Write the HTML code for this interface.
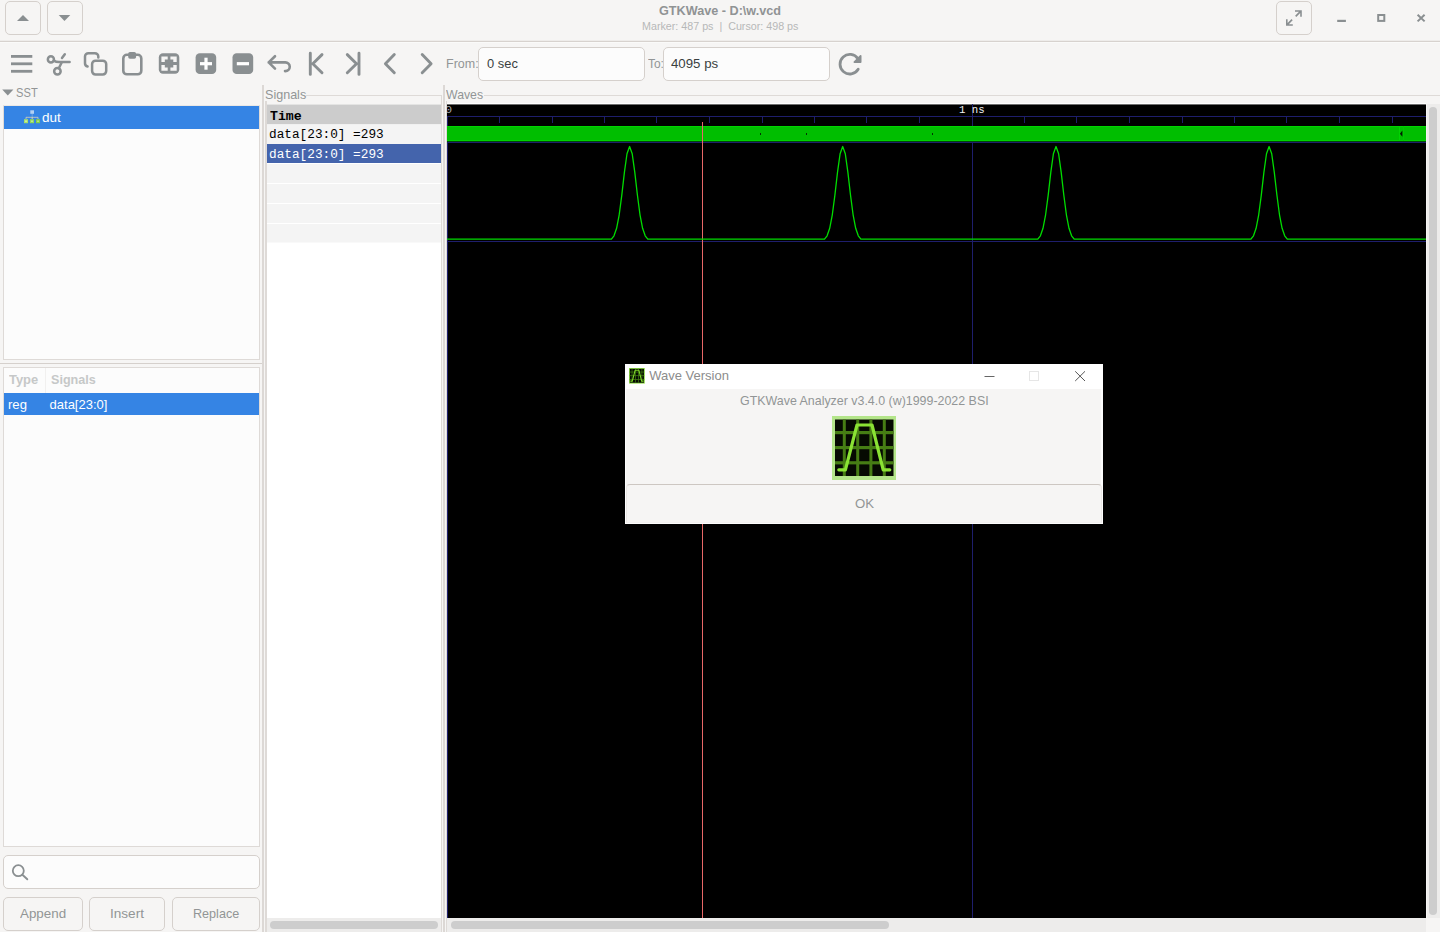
<!DOCTYPE html>
<html>
<head>
<meta charset="utf-8">
<title>GTKWave</title>
<style>
html,body{margin:0;padding:0;}
body{width:1440px;height:932px;overflow:hidden;background:#f6f5f4;font-family:"Liberation Sans",sans-serif;font-size:13px;color:#929596;position:relative;}
.abs{position:absolute;}
#root{position:absolute;left:0;top:0;width:1440px;height:932px;overflow:hidden;background:#f6f5f4;}
.btn{position:absolute;box-sizing:border-box;border:1px solid #d5d0cc;border-radius:5px;background:#f6f5f4;}
.lbl{position:absolute;white-space:nowrap;line-height:1;font-size:13px;}
.entry{position:absolute;box-sizing:border-box;border:1px solid #d5d0cc;border-radius:5px;background:#fcfcfc;}
.mono{font-family:"Liberation Mono",monospace;}
svg{position:absolute;overflow:visible;}
</style>
</head>
<body>
<div id="root">

<div class="abs" style="left:0px;top:40px;width:1440px;height:1px;background:#eeecea;"></div>
<div class="abs" style="left:0px;top:41px;width:1440px;height:1px;background:#d7d2ce;"></div>
<div class="abs" style="left:0px;top:42px;width:1440px;height:1px;background:#fafaf9;"></div>
<div class="btn" style="left:5px;top:1px;width:36px;height:34px;"></div>
<div class="btn" style="left:47px;top:1px;width:36px;height:34px;"></div>
<div class="btn" style="left:1276px;top:1px;width:36px;height:34px;"></div>
<div class="lbl" id="title" style="left:659.34px;top:4.7px;font-size:12.3px;color:#909394;font-weight:bold;transform:scaleX(1.0286);transform-origin:0 0;">GTKWave - D:\w.vcd</div>
<div class="lbl" id="subtitle" style="left:642.25px;top:21.0px;font-size:10.67px;color:#b6b8b8;transform:scaleX(1.0055);transform-origin:0 0;">Marker: 487 ps&nbsp; |&nbsp; Cursor: 498 ps</div>
<div class="lbl" id="from" style="left:446.29px;top:56.8px;transform:scaleX(0.961);transform-origin:0 0;">From:</div>
<div class="entry" style="left:478px;top:47px;width:167px;height:34px;"></div>
<div class="lbl" id="fromv" style="left:486.99px;top:56.7px;color:#3a3f41;transform:scaleX(0.9922);transform-origin:0 0;">0 sec</div>
<div class="lbl" id="to" style="left:647.58px;top:56.7px;transform:scaleX(0.9193);transform-origin:0 0;">To:</div>
<div class="entry" style="left:663px;top:47px;width:167px;height:34px;"></div>
<div class="lbl" id="tov" style="left:671.33px;top:56.6px;color:#3a3f41;transform:scaleX(1.0191);transform-origin:0 0;">4095 ps</div>

<svg style="left:0;top:0" width="1440" height="104" fill="none" stroke="none">
 <path d="M17 21 L23 15 L29 21 Z" fill="#8a8f91"/><path d="M58.7 15 L70.3 15 L64.5 21 Z" fill="#8a8f91"/>
 <path d="M2.2 89.5 L13.4 89.5 L7.8 95.4 Z" fill="#8a8f91"/>
 <g fill="#8a8f91">
  <rect x="11" y="55" width="21.3" height="2.8"/><rect x="11" y="62.4" width="21.3" height="2.8"/><rect x="11" y="69.9" width="21.3" height="2.8"/>
 </g>
 <g stroke="#8a8f91" stroke-width="2.5" stroke-linecap="round" fill="none">
  <circle cx="50.9" cy="59.4" r="3.05"/>
  <circle cx="57.4" cy="71.3" r="3.25"/>
  <path d="M53.7 60.6 Q56 62 59 62 H69.6"/>
  <path d="M58.8 68.3 L61.8 62.3"/>
  <path d="M62 58 L64.8 54.2" stroke-width="2.5"/>
 </g>
 <g stroke="#8a8f91" stroke-width="2.5" stroke-linecap="round" fill="none">
  <path d="M98.3 57.5 V56.6 a3.4 3.4 0 0 0 -3.4 -3.4 H88.4 a3.4 3.4 0 0 0 -3.4 3.4 V63.2 a3.4 3.4 0 0 0 2.6 3.3"/>
  <rect x="92.1" y="60.7" width="14.1" height="13.8" rx="3.4"/>
 </g>
 <g>
  <rect x="123.3" y="54.8" width="18" height="19.5" rx="3.6" stroke="#8a8f91" stroke-width="2.6" fill="none"/>
  <rect x="128.2" y="52" width="7.9" height="6.8" rx="1.8" fill="#8a8f91"/>
 </g>
 <rect x="158.8" y="53.3" width="20.5" height="20.5" rx="4.2" fill="#8a8f91"/>
 <polygon points="161.40,56.40 167.70,56.40 167.70,59.50 164.80,59.50 164.80,62.00 161.40,62.00" fill="#f6f5f4"/><polygon points="176.70,56.40 170.40,56.40 170.40,59.50 173.30,59.50 173.30,62.00 176.70,62.00" fill="#f6f5f4"/><polygon points="161.40,70.70 167.70,70.70 167.70,67.60 164.80,67.60 164.80,65.10 161.40,65.10" fill="#f6f5f4"/><polygon points="176.70,70.70 170.40,70.70 170.40,67.60 173.30,67.60 173.30,65.10 176.70,65.10" fill="#f6f5f4"/>
 <rect x="195.6" y="53.3" width="20.6" height="20.8" rx="4.2" fill="#8a8f91"/>
 <rect x="200" y="62.1" width="12" height="3.2" fill="#fff"/><rect x="204.4" y="57.7" width="3.2" height="12" fill="#fff"/>
 <rect x="232.5" y="53.3" width="20.7" height="20.8" rx="4.2" fill="#8a8f91"/>
 <rect x="236.8" y="62.1" width="12.2" height="3.2" fill="#fff"/>
 <path d="M275 56.2 L268.7 62.4 L275 68.6 M268.7 62.4 H285.4 a4.35 4.35 0 0 1 0 8.7 H285" stroke="#8a8f91" stroke-width="2.6" stroke-linecap="round" stroke-linejoin="round"/>
 <g stroke="#8a8f91" stroke-width="2.9" stroke-linecap="round" stroke-linejoin="round">
  <path d="M310.3 53.3 V74.4 M322 54.6 L312.8 63.7 L322 72.8"/>
  <path d="M359 53.3 V74.4 M347.3 54.6 L356.5 63.7 L347.3 72.8"/>
  <path d="M394.3 54.6 L385.4 63.7 L394.3 72.8"/>
  <path d="M422.2 54.6 L431.1 63.7 L422.2 72.8"/>
 </g>
 <g stroke="#8a8f91" stroke-width="2.8" stroke-linecap="round" stroke-linejoin="round">
  <path d="M857.9 58.6 A9.8 9.8 0 1 0 858.2 69.3"/>
  <path d="M860.6 56 V62.1 H854.4 Z" fill="#8a8f91" stroke-width="1.8"/>
 </g>
 <g fill="#8a8f91">
  <path d="M1295 10.2 H1301.8 V16.8 H1300.2 V13 L1296.3 16.9 L1295.1 15.7 L1299 11.8 H1295 Z"/>
  <path d="M1292.8 25.8 H1286 V19.2 H1287.6 V23 L1291.5 19.1 L1292.7 20.3 L1288.8 24.2 H1292.8 Z"/>
  <rect x="1337.2" y="19.8" width="8.7" height="2.2"/>
 </g>
 <rect x="1378.2" y="15" width="6.1" height="5.9" stroke="#8a8f91" stroke-width="2"/>
 <path d="M1417.6 14.7 L1424.6 21.4 M1424.6 14.7 L1417.6 21.4" stroke="#8a8f91" stroke-width="2"/>
</svg>

<div class="lbl" id="sst" style="left:15.76px;top:86.4px;transform:scaleX(0.8579);transform-origin:0 0;">SST</div>
<div class="abs" style="left:3px;top:105px;width:257px;height:255px;box-sizing:border-box;border:1px solid #dedad7;border-top-color:#ebe8e5;background:#fcfcfc;"></div>
<div class="abs" style="left:4px;top:106px;width:255px;height:23px;background:#3584e4;"></div>
<svg style="left:24px;top:110px" width="16" height="14">
 <rect x="6.3" y="0.3" width="3.7" height="3.5" fill="#b4d0f2"/>
 <rect x="7.7" y="4" width="0.9" height="3" fill="#e8e8d8" opacity="0.35"/>
 <path d="M2 9 V7.3 H14 V9" fill="none" stroke="#e6d9b8" stroke-width="0.9" opacity="0.8"/>
 <rect x="7.7" y="7" width="0.9" height="2" fill="#e6d9b8"/>
 <rect x="0" y="9.2" width="4" height="4" fill="#a5e06a"/><rect x="6" y="9.2" width="4" height="4" fill="#8fd85a"/><rect x="12" y="9.2" width="4" height="4" fill="#7fce4c"/>
 <rect x="1.3" y="10.5" width="1.4" height="1.4" fill="#dff5c8"/><rect x="7.3" y="10.5" width="1.4" height="1.4" fill="#d4f0bc"/><rect x="13.3" y="10.5" width="1.4" height="1.4" fill="#c8ebb0"/>
</svg>
<div class="lbl" id="dut" style="left:42.25px;top:110.8px;color:#fff;transform:scaleX(1.0369);transform-origin:0 0;">dut</div>
<div class="abs" style="left:0px;top:363px;width:263px;height:1px;background:#d5d0cc;"></div>
<div class="abs" style="left:3px;top:367px;width:257px;height:480px;box-sizing:border-box;border:1px solid #dedad7;background:#fcfcfc;"></div>
<div class="abs" style="left:45px;top:368px;width:1px;height:25px;background:#f1f0ef;"></div>
<div class="lbl" id="thtype" style="left:9.49px;top:372.9px;color:#c6c8c8;font-weight:bold;transform:scaleX(0.9931);transform-origin:0 0;">Type</div>
<div class="lbl" id="thsig" style="left:50.91px;top:372.9px;color:#c6c8c8;font-weight:bold;transform:scaleX(0.9691);transform-origin:0 0;">Signals</div>
<div class="abs" style="left:4px;top:393px;width:255px;height:22px;background:#3584e4;"></div>
<div class="lbl" id="reg" style="left:7.99px;top:397.7px;color:#fff;transform:scaleX(1.0062);transform-origin:0 0;">reg</div>
<div class="lbl" id="data" style="left:49.57px;top:397.7px;color:#fff;">data[23:0]</div>
<div class="entry" style="left:3px;top:855px;width:257px;height:34px;"></div>
<svg style="left:0;top:848px" width="60" height="48"><circle cx="18.3" cy="22.7" r="5.5" fill="none" stroke="#8a8f91" stroke-width="1.8"/><path d="M22.4 26.8 L27.3 31.3" stroke="#8a8f91" stroke-width="1.9" stroke-linecap="round"/></svg>
<div class="btn" style="left:3px;top:897px;width:80px;height:34px;"></div>
<div class="btn" style="left:89px;top:897px;width:76px;height:34px;"></div>
<div class="btn" style="left:172px;top:897px;width:88px;height:34px;"></div>
<div class="lbl" id="append" style="left:19.6px;top:907.25px;transform:scaleX(1.0295);transform-origin:0 0;">Append</div>
<div class="lbl" id="insert" style="left:109.68px;top:907.25px;transform:scaleX(1.0444);transform-origin:0 0;">Insert</div>
<div class="lbl" id="replace" style="left:192.78px;top:907.25px;transform:scaleX(0.9693);transform-origin:0 0;">Replace</div>
<div class="abs" style="left:262px;top:85px;width:2px;height:847px;background:#dcd8d5;"></div>
<div class="abs" style="left:443px;top:85px;width:2px;height:847px;background:#dcd8d5;"></div>
<div class="abs" style="left:306px;top:95px;width:136px;height:1px;background:#dedad7;"></div>
<div class="abs" style="left:265px;top:101px;width:2px;height:831px;background:#dedad7;"></div>
<div class="abs" style="left:441px;top:95px;width:1px;height:837px;background:#dedad7;"></div>
<div class="lbl" id="siglbl" style="left:264.97px;top:88.1px;transform:scaleX(0.966);transform-origin:0 0;">Signals</div>
<div class="abs" style="left:267px;top:104px;width:174px;height:814px;background:#fff;"></div>
<div class="abs" style="left:267px;top:104px;width:174px;height:1px;background:#e4e4e3;"></div>
<div class="abs" style="left:267px;top:105px;width:174px;height:19px;background:#cccccc;"></div>
<div class="abs" style="left:267px;top:124px;width:174px;height:1px;background:#f0f0f0;"></div>
<div class="abs" style="left:267px;top:125px;width:174px;height:19px;background:#f4f4f4;"></div>
<div class="abs" style="left:267px;top:144px;width:174px;height:19px;background:#4464ac;"></div>
<div class="abs" style="left:267px;top:164px;width:174px;height:19px;background:#f4f4f4;"></div>
<div class="abs" style="left:267px;top:184px;width:174px;height:19px;background:#f4f4f4;"></div>
<div class="abs" style="left:267px;top:204px;width:174px;height:19px;background:#f4f4f4;"></div>
<div class="abs" style="left:267px;top:224px;width:174px;height:18px;background:#f4f4f4;"></div>
<div class="abs" style="left:267px;top:242px;width:174px;height:1px;background:#f9f9f9;"></div>
<div class="lbl mono" id="time" style="left:270.26px;top:111.4px;font-size:12.65px;color:#000;font-weight:bold;transform:scaleX(1.0438);transform-origin:0 0;">Time</div>
<div class="lbl mono" id="s1" style="left:269.07px;top:129.3px;font-size:12.65px;color:#000;transform:scaleX(1.008);transform-origin:0 0;">data[23:0] =293</div>
<div class="lbl mono" id="s2" style="left:269.07px;top:149.0px;font-size:12.65px;color:#fff;transform:scaleX(1.008);transform-origin:0 0;">data[23:0] =293</div>
<div class="abs" style="left:267px;top:918px;width:174px;height:14px;background:#edeceb;"></div>
<div class="abs" style="left:269.5px;top:921px;width:168px;height:8px;border-radius:4px;background:#cdcdcd;"></div>
<div class="abs" style="left:484px;top:95px;width:956px;height:1px;background:#dedad7;"></div>
<div class="abs" style="left:446px;top:101px;width:1px;height:831px;background:#dedad7;"></div>
<div class="lbl" id="wavlbl" style="left:446.23px;top:88.1px;transform:scaleX(0.9453);transform-origin:0 0;">Waves</div>
<div class="abs" style="left:447px;top:103px;width:979px;height:1px;background:#fff;"></div>
<div class="abs" id="wave" style="left:447px;top:104px;width:979px;height:814px;background:#000;overflow:hidden;">
<svg style="left:0;top:0" width="979" height="814" shape-rendering="crispEdges">
<rect x="0" y="0" width="979" height="1" fill="#6e6e6e"/>
<rect x="0" y="12" width="1" height="802" fill="#1e1e6c"/>
<rect x="0" y="12" width="979" height="1" fill="#1e1e6c"/>
<rect x="52" y="13" width="1" height="6" fill="#1e1e6c"/>
<rect x="105" y="13" width="1" height="6" fill="#1e1e6c"/>
<rect x="157" y="13" width="1" height="6" fill="#1e1e6c"/>
<rect x="209" y="13" width="1" height="6" fill="#1e1e6c"/>
<rect x="262" y="13" width="1" height="6" fill="#1e1e6c"/>
<rect x="315" y="13" width="1" height="6" fill="#1e1e6c"/>
<rect x="367" y="13" width="1" height="6" fill="#1e1e6c"/>
<rect x="419" y="13" width="1" height="6" fill="#1e1e6c"/>
<rect x="472" y="13" width="1" height="6" fill="#1e1e6c"/>
<rect x="525" y="13" width="1" height="6" fill="#1e1e6c"/>
<rect x="577" y="13" width="1" height="6" fill="#1e1e6c"/>
<rect x="629" y="13" width="1" height="6" fill="#1e1e6c"/>
<rect x="682" y="13" width="1" height="6" fill="#1e1e6c"/>
<rect x="735" y="13" width="1" height="6" fill="#1e1e6c"/>
<rect x="787" y="13" width="1" height="6" fill="#1e1e6c"/>
<rect x="839" y="13" width="1" height="6" fill="#1e1e6c"/>
<rect x="892" y="13" width="1" height="6" fill="#1e1e6c"/>
<rect x="945" y="13" width="1" height="6" fill="#1e1e6c"/>
<rect x="525" y="0" width="1" height="814" fill="#1e1e6c"/>
<rect x="0" y="22" width="979" height="15" fill="#00be00"/>
<rect x="0" y="37" width="979" height="1" fill="#004a08"/>
<rect x="0" y="22" width="979" height="1" fill="#00d400"/>
<rect x="0" y="36" width="979" height="1" fill="#00d400"/>
<rect x="313" y="29" width="1" height="2" fill="#033003"/>
<rect x="359" y="29" width="1" height="2" fill="#033003"/>
<rect x="485" y="29" width="1" height="2" fill="#033003"/>
<rect x="952" y="22" width="1" height="15" fill="#00d400"/>
<rect x="956" y="22" width="1" height="15" fill="#00c800"/>
<polygon points="952.9000000000001,29.69999999999999 955.4000000000001,26.599999999999994 955.4000000000001,32.80000000000001" fill="#021a02" shape-rendering="auto"/>
<rect x="0" y="38" width="979" height="1" fill="#1e1e6c"/>
<rect x="0" y="137" width="979" height="1" fill="#1e1e6c"/>
<rect x="255" y="18" width="1" height="814" fill="#e86868"/>
</svg>
<svg style="left:0;top:0" width="979" height="814"><polyline points="0.0,135.20 156.6,135.20 159.2,135.20 161.8,135.20 164.4,135.20 167.0,131.78 169.6,124.29 172.2,110.79 174.8,91.05 177.4,68.40 180.0,49.77 182.6,42.50 185.2,49.77 187.8,68.40 190.4,91.05 193.0,110.79 195.6,124.29 198.2,131.78 200.8,135.20 203.4,135.20 206.0,135.20 208.6,135.20 369.7,135.20 372.3,135.20 374.9,135.20 377.5,135.20 380.1,131.78 382.7,124.29 385.3,110.79 387.9,91.05 390.5,68.40 393.1,49.77 395.7,42.50 398.3,49.77 400.9,68.40 403.5,91.05 406.1,110.79 408.7,124.29 411.3,131.78 413.9,135.20 416.5,135.20 419.1,135.20 421.7,135.20 583.0,135.20 585.6,135.20 588.2,135.20 590.8,135.20 593.4,131.78 596.0,124.29 598.6,110.79 601.2,91.05 603.8,68.40 606.4,49.77 609.0,42.50 611.6,49.77 614.2,68.40 616.8,91.05 619.4,110.79 622.0,124.29 624.6,131.78 627.2,135.20 629.8,135.20 632.4,135.20 635.0,135.20 796.1,135.20 798.7,135.20 801.3,135.20 803.9,135.20 806.5,131.78 809.1,124.29 811.7,110.79 814.3,91.05 816.9,68.40 819.5,49.77 822.1,42.50 824.7,49.77 827.3,68.40 829.9,91.05 832.5,110.79 835.1,124.29 837.7,131.78 840.3,135.20 842.9,135.20 845.5,135.20 848.1,135.20 979.5,135.20" fill="none" stroke="#00dc00" stroke-width="1.3" stroke-linejoin="round"/></svg>
</div>
<div class="abs" style="left:447px;top:104px;width:979px;height:14px;overflow:hidden;"><div class="abs" style="left:-447px;top:-104px;width:1440px;height:200px;">
<div class="lbl mono" id="r0" style="left:444.88px;top:105.9px;font-size:10px;color:#a8a8a8;transform:scaleX(1.1797);transform-origin:0 0;">0</div>
<div class="lbl mono" id="r1" style="left:959.46px;top:105.9px;font-size:10px;color:#f0f0f0;transform:scaleX(1.0674);transform-origin:0 0;">1 ns</div>
</div></div>
<div class="abs" style="left:447px;top:918px;width:979px;height:14px;background:#edeceb;"></div>
<div class="abs" style="left:450.5px;top:921px;width:438px;height:8px;border-radius:4px;background:#cdcdcd;"></div>
<div class="abs" style="left:1427px;top:104px;width:13px;height:814px;background:#edeceb;"></div>
<div class="abs" style="left:1429px;top:107.4px;width:8px;height:807.6px;border-radius:4px;background:#cdcdcd;"></div>
<div class="abs" id="dlg" style="left:625px;top:364px;width:478px;height:160px;background:#fdfdfd;">
 <div class="abs" style="left:1px;top:0;width:477px;height:25px;background:#ffffff;"></div>
 <div class="abs" style="left:1px;top:25px;width:475px;height:134px;background:#f6f5f4;"></div>
 <svg style="left:3.5px;top:4.1px" width="15.8" height="15.6" viewBox="0 0 64 64" preserveAspectRatio="none">
   <rect x="0" y="0" width="64" height="64" fill="#8fdc46"/>
   <rect x="3.5" y="3.5" width="57" height="57" fill="#050a02"/>
   <g fill="#3f7a10">
    <rect x="10.8" y="3.5" width="3" height="57"/><rect x="24.2" y="3.5" width="3" height="57"/><rect x="37.4" y="3.5" width="3" height="57"/><rect x="50.8" y="3.5" width="3" height="57"/>
    <rect x="3" y="15" width="58.5" height="3.2"/><rect x="3" y="30" width="58.5" height="3.2"/><rect x="3" y="45.2" width="58.5" height="3.2"/>
   </g>
   <path d="M6.8 53.8 H13.4 L25 9 H40 L51.2 53.8 H57.8" fill="none" stroke="#7ed62a" stroke-width="4.4" stroke-linecap="round" stroke-linejoin="round"/>
 </svg>
 <svg style="left:0;top:0" width="478" height="25">
  <rect x="359.5" y="12" width="10" height="1" fill="#666"/>
  <rect x="404.5" y="7.5" width="9" height="9" fill="none" stroke="#e6e6e6" stroke-width="1"/>
  <path d="M450.2 7.3 L460 17 M460 7.3 L450.2 17" stroke="#555" stroke-width="1" fill="none"/>
 </svg>
 <div class="abs" style="left:207px;top:52px;width:64px;height:64px;">
  <svg style="left:0;top:0" width="64" height="64" viewBox="0 0 64 64">
   <rect x="0" y="0" width="64" height="64" fill="#b4e58a"/>
   <rect x="3" y="3.5" width="58.5" height="56.5" fill="#060a02"/>
   <g fill="#467d14">
    <rect x="10.8" y="3.5" width="3" height="56.5"/><rect x="24.2" y="3.5" width="3" height="56.5"/><rect x="37.4" y="3.5" width="3" height="56.5"/><rect x="50.8" y="3.5" width="3" height="56.5"/>
    <rect x="3" y="15" width="58.5" height="3.2"/><rect x="3" y="30" width="58.5" height="3.2"/><rect x="3" y="45.2" width="58.5" height="3.2"/>
   </g>
   <path d="M6.8 53.8 H13.4 L25 9 H40 L51.2 53.8 H57.8" fill="none" stroke="#8ae234" stroke-width="3.2" stroke-linecap="round" stroke-linejoin="round"/>
  </svg>
 </div>
 <div class="abs" style="left:1px;top:120px;width:476px;height:39px;box-sizing:border-box;border:1px solid #cdc7c2;border-left-color:#ebe8e6;border-right-color:#ebe8e6;border-bottom-color:#f3f1f0;border-radius:4px 4px 0 0;background:#f6f5f4;"></div>
</div>
<div class="lbl" id="dtitle" style="left:649.2px;top:368.7px;color:#8c8c8c;">Wave Version</div>
<div class="lbl" id="dtext" style="left:739.66px;top:393.8px;transform:scaleX(0.9549);transform-origin:0 0;">GTKWave Analyzer v3.4.0 (w)1999-2022 BSI</div>
<div class="lbl" id="ok" style="left:854.88px;top:497.1px;transform:scaleX(1.0152);transform-origin:0 0;">OK</div>
</div>
</body>
</html>
